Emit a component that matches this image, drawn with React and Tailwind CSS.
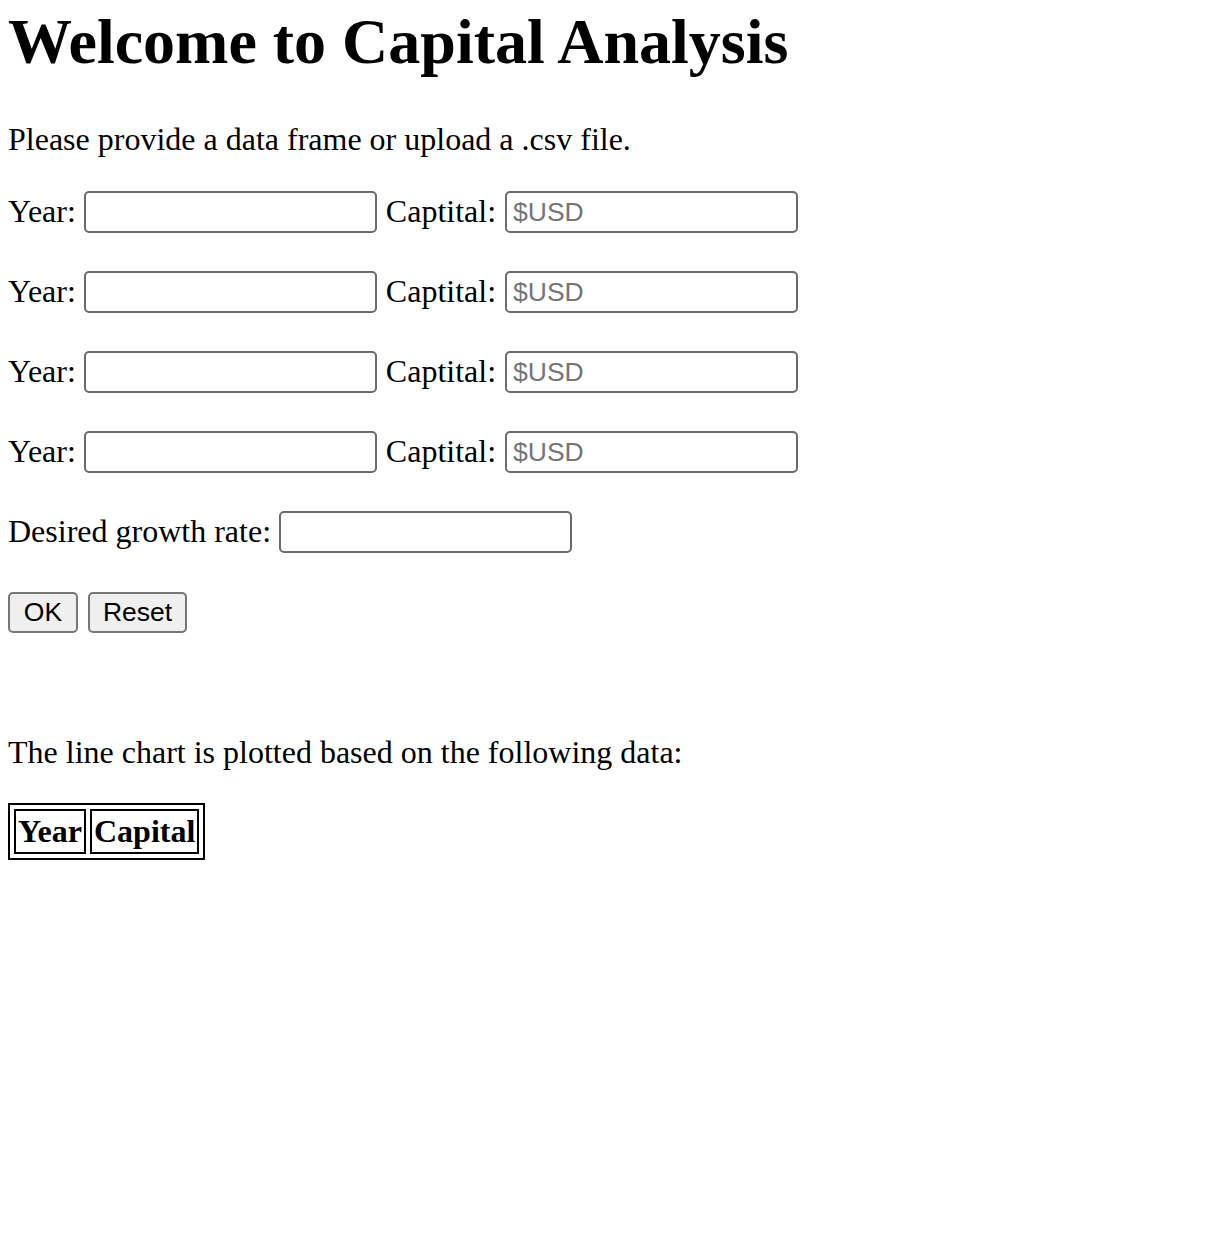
import React from "react";

const inputCls =
  "w-[293px] h-[42px] border-2 border-[#6b6b6b] rounded-[5px] bg-white px-[6px] text-[26.5px] font-['Liberation_Sans',sans-serif] placeholder:text-[#757575] outline-none";

function Row() {
  return (
    <div className="flex items-center h-[42px] mb-[38px]">
      <span className="-mt-[2px]">Year:</span>
      <input type="text" className={`${inputCls} ml-[8px]`} />
      <span className="ml-[9px] -mt-[2px]">Captital:</span>
      <input type="text" placeholder="$USD" className={`${inputCls} ml-[9px]`} />
    </div>
  );
}

export default function App() {
  return (
    <div className="pl-2 text-black bg-white min-h-[1242px] font-['Liberation_Serif',serif] text-[32px] leading-[37px]">
      <h1 className="text-[64px] font-bold leading-[72px] pt-[6px]">
        Welcome to Capital Analysis
      </h1>
      <p className="mt-[43px]">Please provide a data frame or upload a .csv file.</p>
      <div className="mt-[33px]">
        <Row />
        <Row />
        <Row />
        <Row />
        <div className="flex items-center h-[42px] mb-[38px]">
          <span className="-mt-[2px]">Desired growth rate:</span>
          <input type="text" className={`${inputCls} ml-[8px]`} />
        </div>
        <div className="flex items-center gap-[10px] h-[42px]">
          <button className="h-[41px] w-[70px] bg-[#efefef] border-2 border-[#767676] rounded-[5px] text-[26.5px] font-['Liberation_Sans',sans-serif]">
            OK
          </button>
          <button className="h-[41px] w-[99px] bg-[#efefef] border-2 border-[#767676] rounded-[5px] text-[26.5px] font-['Liberation_Sans',sans-serif]">
            Reset
          </button>
        </div>
      </div>
      <p className="mt-[101px]">The line chart is plotted based on the following data:</p>
      <table className="mt-[32px] border-separate border-spacing-[4px] border-2 border-black">
        <thead>
          <tr>
            <th className="border-2 border-black px-[2px] py-[2px] font-bold">Year</th>
            <th className="border-2 border-black px-[2px] py-[2px] font-bold">Capital</th>
          </tr>
        </thead>
      </table>
    </div>
  );
}
